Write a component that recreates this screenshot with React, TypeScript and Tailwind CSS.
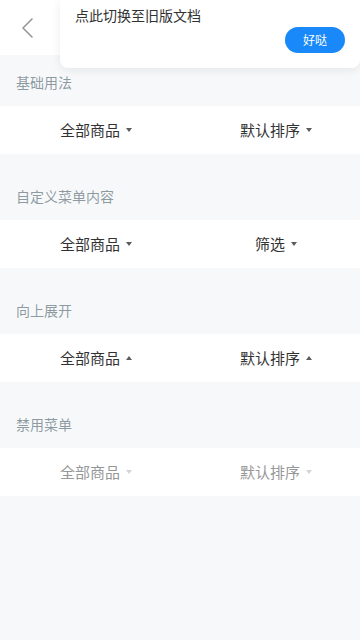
const font = { fontFamily: '"Noto Sans CJK SC", "Noto Sans", sans-serif' }

function Caret({ up, disabled }: { up?: boolean; disabled?: boolean }) {
  return (
    <span
      className={`absolute -right-[12px] top-1/2 -translate-y-1/2 w-0 h-0 border-x-[3.5px] border-x-transparent opacity-80 ${
        up ? 'border-b-[4px]' : 'border-t-[4px]'
      } ${disabled ? 'border-t-[#c8c9cc] border-b-[#c8c9cc]' : 'border-t-[#323233] border-b-[#323233]'}`}
    />
  )
}

function Menu({ items, up, disabled }: { items: string[]; up?: boolean; disabled?: boolean }) {
  return (
    <div className="flex h-12 bg-white">
      {items.map((t) => (
        <div key={t} className="flex-1 flex items-center justify-center">
          <span className={`relative text-[15px] leading-[22px] ${disabled ? 'text-[#969799]' : 'text-[#323233]'}`}>
            {t}
            <Caret up={up} disabled={disabled} />
          </span>
        </div>
      ))}
    </div>
  )
}

function Title({ text, first }: { text: string; first?: boolean }) {
  return (
    <h2 className={`px-4 pb-4 text-sm leading-4 text-[#455a64]/60 ${first ? 'pt-[19px]' : 'pt-[34px]'}`}>{text}</h2>
  )
}

export default function App() {
  return (
    <div className="relative min-h-[640px] bg-[#f7f8fa]" style={font}>
      <div className="h-[55px] bg-white flex items-center pl-4">
        <svg width="20" height="24" viewBox="0 0 20 24" fill="none">
          <path d="M16 3 L7 12 L16 21" stroke="#969799" strokeWidth="1.6" strokeLinecap="round" strokeLinejoin="round" />
        </svg>
      </div>

      <Title text="基础用法" first />
      <Menu items={['全部商品', '默认排序']} />

      <Title text="自定义菜单内容" />
      <Menu items={['全部商品', '筛选']} />

      <Title text="向上展开" />
      <Menu items={['全部商品', '默认排序']} up />

      <Title text="禁用菜单" />
      <Menu items={['全部商品', '默认排序']} disabled />

      <div className="absolute left-[60px] top-0 w-[300px] h-[68px] bg-white rounded-b-lg shadow-[0_2px_10px_rgba(0,0,0,0.08)] pl-[15px] pr-[15px] pt-[5px]">
        <p className="text-sm leading-5 text-[#323233]">点此切换至旧版文档</p>
        <div className="flex justify-end mt-[2px]">
          <button className="w-[60px] h-[26px] rounded-full bg-[#1989fa] text-white text-xs">好哒</button>
        </div>
      </div>
    </div>
  )
}
